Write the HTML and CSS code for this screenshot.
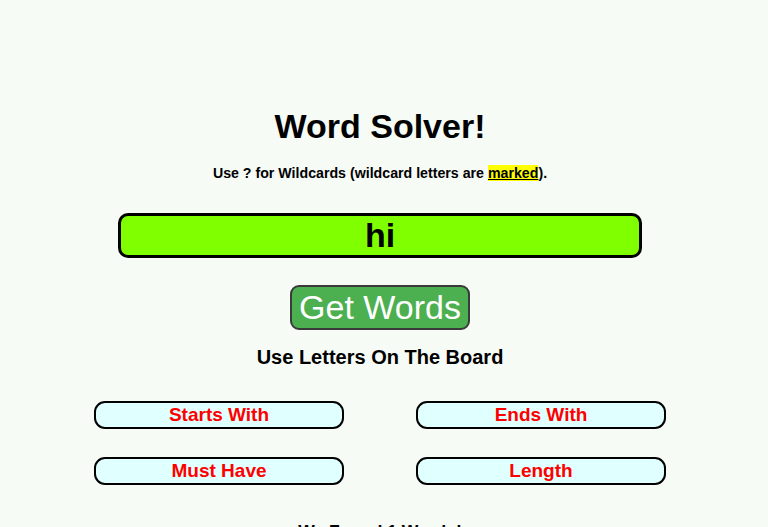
FILE: index.html
```html
<!DOCTYPE html>
<html>
<head>
<meta charset="utf-8">
<link rel="stylesheet" href="styles.css">
</head>
<body>
<main class="page">
  <h1 class="title">Word Solver!</h1>
  <p class="hint">Use ? for Wildcards (wildcard letters are <span class="mark">marked</span>).</p>
  <div class="letters">hi</div>
  <button class="go">Get Words</button>
  <h2 class="board">Use Letters On The Board</h2>
  <div class="filters">
    <div class="filter">Starts With</div>
    <div class="filter">Ends With</div>
    <div class="filter">Must Have</div>
    <div class="filter">Length</div>
  </div>
  <p class="found">We Found 1 Words!</p>
</main>
</body>
</html>
```
FILE: styles.css
```css
html, body {
  margin: 0;
  padding: 0;
  background: #f6fbf6;
  overflow: hidden;
}
.page {
  width: 760px;
  display: flex;
  flex-direction: column;
  align-items: center;
  font-family: "Liberation Sans", Arial, sans-serif;
  color: #000;
}
.title {
  margin: 106px 0 0;
  font-size: 34px;
  line-height: 40px;
  font-weight: bold;
}
.hint {
  margin: 17px 0 0;
  font-size: 14.2px;
  line-height: 20px;
  font-weight: bold;
}
.mark {
  background: #ffff00;
  text-decoration: underline;
}
.letters {
  margin-top: 30px;
  box-sizing: border-box;
  width: 524px;
  height: 45px;
  border: 3px solid #000;
  border-radius: 10px;
  background: #7fff00;
  font-size: 34px;
  font-weight: bold;
  line-height: 39px;
  text-align: center;
}
.go {
  margin-top: 27px;
  box-sizing: border-box;
  width: 180px;
  height: 45px;
  padding: 0;
  border: 2px solid #3a3a3a;
  border-radius: 9px;
  background: #4caf50;
  color: #fff;
  font-family: "Liberation Sans", Arial, sans-serif;
  font-size: 34px;
  line-height: 41px;
}
.board {
  margin: 15px 0 0;
  font-size: 20px;
  line-height: 24px;
  font-weight: bold;
}
.filters {
  margin-top: 32px;
  display: grid;
  grid-template-columns: 250px 250px;
  column-gap: 72px;
  row-gap: 28px;
}
.filter {
  box-sizing: border-box;
  height: 28px;
  border: 2.5px solid #000;
  border-radius: 11px;
  background: #e0ffff;
  color: #ff0000;
  font-size: 19px;
  font-weight: bold;
  line-height: 23px;
  text-align: center;
}
.found {
  margin: 36px 0 0;
  font-size: 17.5px;
  line-height: 22px;
  font-weight: bold;
}
```
